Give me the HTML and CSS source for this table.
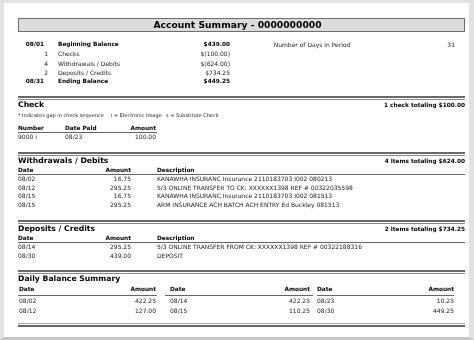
FILE: index.html
```html
<!DOCTYPE html>
<html>
<head>
<meta charset="utf-8">
<link rel="stylesheet" href="styles.css">
</head>
<body>
<div class="page">
  <div class="title">Account Summary - 0000000000</div>

  <div class="summary">
    <div class="sum-left">
      <span class="d b">08/01</span><span class="b">Beginning Balance</span><span class="a b">$439.00</span>
      <span class="n">1</span><span>Checks</span><span class="a">$(100.00)</span>
      <span class="n">4</span><span>Withdrawals / Debits</span><span class="a">$(624.00)</span>
      <span class="n">2</span><span>Deposits / Credits</span><span class="a">$734.25</span>
      <span class="d b">08/31</span><span class="b">Ending Balance</span><span class="a b">$449.25</span>
    </div>
    <div class="sum-right"><span>Number of Days in Period</span><span>31</span></div>
  </div>

  <div class="rule r-check"></div>
  <div class="sec-head"><h2>Check</h2><span class="total">1 check totaling $100.00</span></div>
  <div class="legend">
    <span>* Indicates gap in check sequence</span>
    <span>i = Electronic Image</span>
    <span>s = Substitute Check</span>
  </div>
  <div class="check-tbl">
    <div class="crow thead"><span>Number</span><span class="dp">Date Paid</span><span class="a">Amount</span></div>
    <div class="crow"><span>9000 i</span><span class="dp">08/23</span><span class="a">100.00</span></div>
  </div>

  <div class="rule r-wd"></div>
  <div class="sec-head"><h2>Withdrawals / Debits</h2><span class="total">4 items totaling $624.00</span></div>
  <div class="tx-tbl">
    <div class="trow thead"><span>Date</span><span class="a">Amount</span><span class="desc">Description</span></div>
    <div class="trow"><span>08/02</span><span class="a">16.75</span><span class="desc">KANAWHA INSURANC Insurance 2110183703 I002 080213</span></div>
    <div class="trow"><span>08/12</span><span class="a">295.25</span><span class="desc">5/3 ONLINE TRANSFER TO CK: XXXXXX1398 REF # 00322035598</span></div>
    <div class="trow"><span>08/15</span><span class="a">16.75</span><span class="desc">KANAWHA INSURANC Insurance 2110183703 I002 081513</span></div>
    <div class="trow"><span>08/15</span><span class="a">295.25</span><span class="desc">ARM INSURANCE ACH BATCH ACH ENTRY Ed Buckley 081513</span></div>
  </div>

  <div class="rule r-dep"></div>
  <div class="sec-head"><h2>Deposits / Credits</h2><span class="total">2 items totaling $734.25</span></div>
  <div class="tx-tbl">
    <div class="trow thead"><span>Date</span><span class="a">Amount</span><span class="desc">Description</span></div>
    <div class="trow"><span>08/14</span><span class="a">295.25</span><span class="desc">5/3 ONLINE TRANSFER FROM CK: XXXXXX1398 REF # 00322188316</span></div>
    <div class="trow"><span>08/30</span><span class="a">439.00</span><span class="desc">DEPOSIT</span></div>
  </div>

  <div class="rule r-daily"></div>
  <div class="sec-head"><h2>Daily Balance Summary</h2></div>
  <div class="daily">
    <div class="grp g1">
      <div class="drow thead"><span>Date</span><span class="a">Amount</span></div>
      <div class="drow"><span>08/02</span><span class="a">422.25</span></div>
      <div class="drow"><span>08/12</span><span class="a">127.00</span></div>
    </div>
    <div class="grp g2">
      <div class="drow thead"><span>Date</span><span class="a">Amount</span></div>
      <div class="drow"><span>08/14</span><span class="a">422.25</span></div>
      <div class="drow"><span>08/15</span><span class="a">110.25</span></div>
    </div>
    <div class="grp g3">
      <div class="drow thead"><span>Date</span><span class="a">Amount</span></div>
      <div class="drow"><span>08/23</span><span class="a">10.25</span></div>
      <div class="drow"><span>08/30</span><span class="a">449.25</span></div>
    </div>
  </div>
  <div class="end-rule"></div>
</div>
</body>
</html>
```
FILE: styles.css
```css
* { box-sizing: border-box; }

body {
  margin: 0;
  background: #ffffff;
  font-family: "DejaVu Sans", sans-serif;
  color: #1c1c1c;
  font-size: 6px;
}

.page {
  width: 474px;
  height: 340px;
  border-style: solid;
  border-color: #e2e2e2;
  border-width: 3px 5px 3px 4px;
  border-bottom-color: #c6c6c6;
  padding: 15px 4px 0 14px;
  overflow: hidden;
  background: #ffffff;
  filter: grayscale(1);
}

.title {
  height: 14px;
  border: 1px solid #6e6e6e;
  background: #dcdcdc;
  text-align: center;
  padding-right: 8px;
  font-weight: bold;
  font-size: 9.2px;
  line-height: 12px;
  color: #000000;
}

.b {
  font-weight: bold;
  font-size: 5.8px;
  color: #000000;
}

.a { text-align: right; }

.summary {
  display: flex;
  margin-top: 8px;
  line-height: 9.3px;
}

.sum-left {
  width: 212px;
  display: grid;
  grid-template-columns: 30px 1fr auto;
  column-gap: 10px;
}

.sum-left .n { text-align: right; }
.sum-left .d { text-align: right; padding-right: 4px; }

.sum-right {
  margin-left: 43.7px;
  flex: 1;
  display: flex;
  justify-content: space-between;
  padding-right: 10px;
  align-self: flex-start;
}

.rule {
  height: 4px;
  border-top: 2px solid #6a6a6a;
  border-bottom: 1px solid #8a8a8a;
}

.r-check { margin-top: 9.5px; }
.r-wd { margin-top: 11.3px; }
.r-dep { margin-top: 10.6px; }
.r-daily { margin-top: 9.6px; }

.sec-head {
  display: flex;
  justify-content: space-between;
  align-items: baseline;
  margin-top: 1px;
  line-height: 8px;
}

.sec-head h2 {
  margin: 0;
  font-size: 7.7px;
  font-weight: bold;
  color: #000000;
}

.total {
  font-weight: bold;
  font-size: 5.8px;
  color: #000000;
}

.legend {
  margin-top: 3px;
  display: grid;
  grid-template-columns: 93px 55px auto;
  font-size: 5px;
  line-height: 7px;
}

.thead {
  font-weight: bold;
  font-size: 5.8px;
  color: #000000;
  border-bottom: 1px solid #666666;
}

.check-tbl {
  width: 139px;
  margin-top: 5px;
}

.crow {
  display: grid;
  grid-template-columns: 46px 1fr auto;
  line-height: 8px;
  padding-right: 1px;
}

.crow .dp { padding-left: 1px; }

.tx-tbl { margin-top: 2px; }

.trow {
  display: grid;
  grid-template-columns: 60px 53px 1fr;
  line-height: 8.6px;
}

.trow.thead { line-height: 7px; }

.trow .desc { padding-left: 26px; }

.daily {
  display: flex;
  margin-top: 2.8px;
}

.grp { display: flex; flex-direction: column; }
.g1 { width: 139px; }
.g2 { width: 148px; margin-left: 8px; }
.g3 { width: 137px; margin-left: 4px; }

.drow {
  display: grid;
  grid-template-columns: 1fr auto;
  line-height: 10px;
}

.drow.thead {
  line-height: 7px;
  padding-bottom: 2.5px;
}

.g1 .drow { padding: 0 1px; }
.g1 .drow.thead { padding-bottom: 2.5px; }
.g2 .drow { padding: 0 3px 0 5px; }
.g2 .drow.thead { padding-bottom: 2.5px; }

.end-rule {
  margin-top: 6.4px;
  height: 4px;
  border-top: 1px solid #a8a8a8;
  border-bottom: 2px solid #666666;
}
```
